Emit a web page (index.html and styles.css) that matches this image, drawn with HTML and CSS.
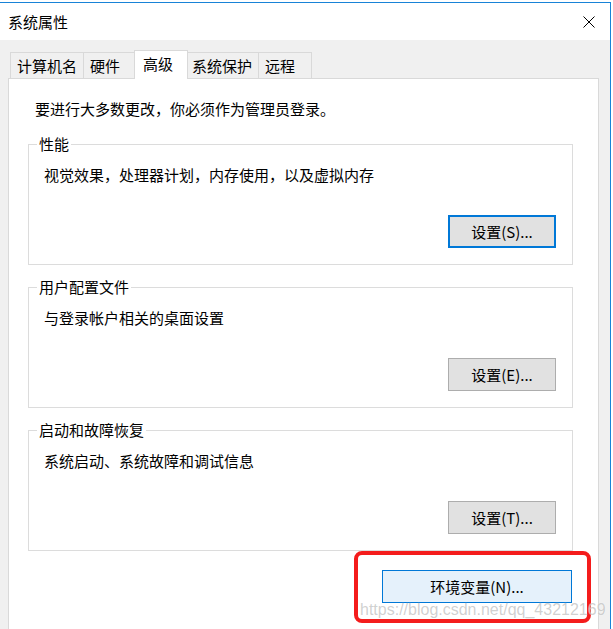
FILE: index.html
```html
<!DOCTYPE html>
<html>
<head>
    <title>系统属性</title>
    <meta charset="utf-8">
    <link rel="stylesheet" href="styles.css">
</head>
<body>

    <div class="strip"></div>

    <div class="window">
        <div class="titlebar">
            <span class="title">系统属性</span>
            <svg class="close" width="12" height="12" viewBox="0 0 12 12">
                <path d="M0.5 0.5 L11.5 11.5 M11.5 0.5 L0.5 11.5" stroke="#000" stroke-width="1" fill="none"/>
            </svg>
        </div>

        <div class="tabs">
            <div class="tab">计算机名</div>
            <div class="tab">硬件</div>
            <div class="tab active">高级</div>
            <div class="tab">系统保护</div>
            <div class="tab">远程</div>
        </div>

        <div class="panel">
            <div class="intro">要进行大多数更改，你必须作为管理员登录。</div>

            <fieldset class="group">
                <legend>性能</legend>
                <div class="desc">视觉效果，处理器计划，内存使用，以及虚拟内存</div>
                <div class="row"><button class="btn focused">设置(S)...</button></div>
            </fieldset>

            <fieldset class="group">
                <legend>用户配置文件</legend>
                <div class="desc">与登录帐户相关的桌面设置</div>
                <div class="row"><button class="btn">设置(E)...</button></div>
            </fieldset>

            <fieldset class="group">
                <legend>启动和故障恢复</legend>
                <div class="desc">系统启动、系统故障和调试信息</div>
                <div class="row"><button class="btn">设置(T)...</button></div>
            </fieldset>

            <div class="row env-row"><button class="btn env">环境变量(N)...</button></div>
        </div>
    </div>

    <!-- 标注框和水印 -->
    <div class="mark"></div>
    <div class="watermark">https://blog.csdn.net/qq_43212169</div>

</body>
</html>
```

FILE: styles.css
```css
html, body {
    height: 100%;
}

body {
    margin: 0;
    background-color: #ffffff;
    font-family: "Noto Sans CJK SC", sans-serif;
    font-size: 15px;
    line-height: 20px;
    color: #000000;
    overflow: hidden;
    display: flex;
    flex-direction: column;
}

.strip {
    height: 2px;
    background: #ffffff;
}

.window {
    flex: 1;
    width: 611px;
    box-sizing: border-box;
    border-top: 1px solid #1883d7;
    border-right: 1px solid #1883d7;
    background-color: #f0f0f0;
    display: flex;
    flex-direction: column;
}

/*標題列*/
.titlebar {
    height: 37px;
    background: #ffffff;
    display: flex;
    align-items: center;
    justify-content: space-between;
    padding: 0 15px 0 8px;
}

.close {
    display: block;
}

/*分頁*/
.tabs {
    display: flex;
    align-items: flex-end;
    height: 28px;
    margin-top: 10px;
    padding-left: 10px;
}

.tab {
    height: 26px;
    box-sizing: border-box;
    min-width: 54px;
    padding: 0 6px;
    border: 1px solid #d9d9d9;
    border-bottom: 0;
    margin-left: -1px;
    display: flex;
    align-items: center;
}

.tab:first-child {
    margin-left: 0;
}

.tab.active {
    position: relative;
    z-index: 1;
    height: 29px;
    margin: 0 -2px -1px -3px;
    padding: 0 8px 2px 8px;
    background: #ffffff;
}

.panel {
    flex: 1;
    margin: 0 11px 0 8px;
    border: 1px solid #d9d9d9;
    border-bottom: 0;
    background: #ffffff;
    padding: 20px 25px 0 19px;
    overflow: hidden;
}

.intro {
    padding-left: 7px;
    margin-bottom: 15px;
}

.group {
    margin: 0 0 12px 0;
    border: 1px solid #dcdcdc;
    padding: 0 16px 16px 15px;
    min-width: 0;
}

.group legend {
    padding: 0 2px;
    margin-left: -7px;
    line-height: 20px;
}

.desc {
    margin-top: 11px;
}

.row {
    display: flex;
    justify-content: flex-end;
    margin-top: 30px;
}

/*按鈕*/
.btn {
    width: 108px;
    height: 33px;
    font-family: inherit;
    font-size: 15px;
    color: #000000;
    background: #e1e1e1;
    border: 1px solid #adadad;
    padding: 0;
}

.btn.focused {
    border: 2px solid #0078d7;
}

.env-row {
    margin-top: 19px;
    padding-right: 1px;
}

.btn.env {
    width: 190px;
    background: #e5f1fb;
    border-color: #0078d7;
}

.mark {
    position: absolute;
    left: 354px;
    top: 551px;
    width: 237px;
    height: 72px;
    box-sizing: border-box;
    border: 4px solid #f41c1c;
    border-radius: 8px;
}

.watermark {
    position: absolute;
    left: 360px;
    top: 601px;
    font-family: "Liberation Sans", sans-serif;
    font-size: 16px;
    line-height: 18px;
    color: rgba(150, 150, 150, 0.45);
    text-shadow: 0 0 1px rgba(255, 255, 255, 0.9);
    white-space: nowrap;
}
```
